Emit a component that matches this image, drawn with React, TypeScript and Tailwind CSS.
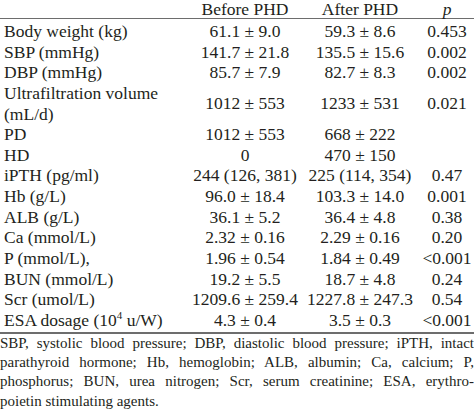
import React from "react";

type Row = { label: React.ReactNode; before: string; after: string; p: string };

const rows: Row[] = [
  { label: "Body weight (kg)", before: "61.1 ± 9.0", after: "59.3 ± 8.6", p: "0.453" },
  { label: "SBP (mmHg)", before: "141.7 ± 21.8", after: "135.5 ± 15.6", p: "0.002" },
  { label: "DBP (mmHg)", before: "85.7 ± 7.9", after: "82.7 ± 8.3", p: "0.002" },
  {
    label: (
      <>
        Ultrafiltration volume
        <br />
        (mL/d)
      </>
    ),
    before: "1012 ± 553",
    after: "1233 ± 531",
    p: "0.021",
  },
  { label: "PD", before: "1012 ± 553", after: "668 ± 222", p: "" },
  { label: "HD", before: "0", after: "470 ± 150", p: "" },
  { label: "iPTH (pg/ml)", before: "244 (126, 381)", after: "225 (114, 354)", p: "0.47" },
  { label: "Hb (g/L)", before: "96.0 ± 18.4", after: "103.3 ± 14.0", p: "0.001" },
  { label: "ALB (g/L)", before: "36.1 ± 5.2", after: "36.4 ± 4.8", p: "0.38" },
  { label: "Ca (mmol/L)", before: "2.32 ± 0.16", after: "2.29 ± 0.16", p: "0.20" },
  { label: "P (mmol/L),", before: "1.96 ± 0.54", after: "1.84 ± 0.49", p: "<0.001" },
  { label: "BUN (mmol/L)", before: "19.2 ± 5.5", after: "18.7 ± 4.8", p: "0.24" },
  { label: "Scr (umol/L)", before: "1209.6 ± 259.4", after: "1227.8 ± 247.3", p: "0.54" },
  {
    label: (
      <>
        ESA dosage (10<span className="text-[11px] align-[7px] leading-none">4</span> u/W)
      </>
    ),
    before: "4.3 ± 0.4",
    after: "3.5 ± 0.3",
    p: "<0.001",
  },
];

const cols = "grid grid-cols-[190px_110px_120px_54px]";

const caption = [
  "SBP, systolic blood pressure; DBP, diastolic blood pressure; iPTH, intact",
  "parathyroid hormone; Hb, hemoglobin; ALB, albumin; Ca, calcium; P,",
  "phosphorus; BUN, urea nitrogen; Scr, serum creatinine; ESA, erythro-",
];

export default function App() {
  return (
    <div className="w-[474px] h-[412px] overflow-hidden bg-white text-[#231f20] font-['Liberation_Serif',serif]">
      <div className="text-[17.5px]">
        <div className={`${cols} h-[19px] leading-[19px] border-b border-[#6d6d6d]`}>
          <div />
          <div className="text-center">Before PHD</div>
          <div className="text-center">After PHD</div>
          <div className="text-center italic">p</div>
        </div>
        <div className="pt-[2px] pb-[1px] border-b-2 border-[#6d6d6d] leading-[20.64px]">
          {rows.map((r, i) => (
            <div key={i} className={`${cols} items-center`}>
              <div className="pl-1 whitespace-nowrap">{r.label}</div>
              <div className="text-center whitespace-nowrap">{r.before}</div>
              <div className="text-center whitespace-nowrap">{r.after}</div>
              <div className="text-center whitespace-nowrap">{r.p}</div>
            </div>
          ))}
        </div>
      </div>
      <div className="text-[15px] leading-[19.4px]">
        {caption.map((c) => (
          <div key={c} className="text-justify [text-align-last:justify] whitespace-nowrap">
            {c}
          </div>
        ))}
        <div>poietin stimulating agents.</div>
      </div>
    </div>
  );
}
